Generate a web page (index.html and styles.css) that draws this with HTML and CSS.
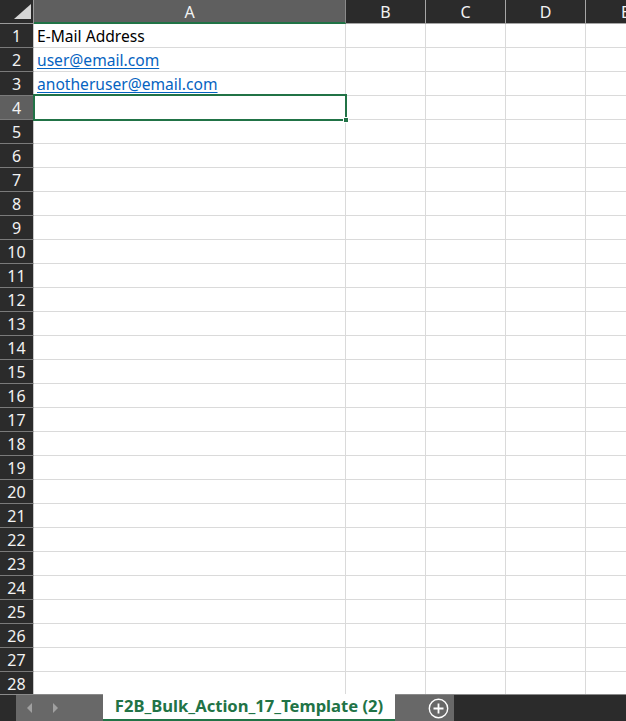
FILE: index.html
```html
<!DOCTYPE html>
<html>
<head>
<meta charset="utf-8">
<link rel="stylesheet" href="styles.css">
</head>
<body>
<div class="app">
  <div class="sheet">
    <div class="grid" id="grid">
      <div class="corner"><svg width="34" height="24" viewBox="0 0 34 24"><polygon points="14,19 31,19 31,4" fill="#d6d6d6"/></svg></div>
      <div class="colhead sel">A</div>
      <div class="colhead">B</div>
      <div class="colhead">C</div>
      <div class="colhead">D</div>
      <div class="colhead">E</div>

      <div class="rowhead">1</div><div class="cell">E-Mail Address</div><div class="cell"></div><div class="cell"></div><div class="cell"></div><div class="cell"></div>
      <div class="rowhead">2</div><div class="cell"><span class="link">user@email.com</span></div><div class="cell"></div><div class="cell"></div><div class="cell"></div><div class="cell"></div>
      <div class="rowhead">3</div><div class="cell"><span class="link">anotheruser@email.com</span></div><div class="cell"></div><div class="cell"></div><div class="cell"></div><div class="cell"></div>
      <div class="rowhead sel">4</div><div class="cell active"><span class="handle"></span></div><div class="cell"></div><div class="cell"></div><div class="cell"></div><div class="cell"></div>
      <div class="rowhead">5</div><div class="cell"></div><div class="cell"></div><div class="cell"></div><div class="cell"></div><div class="cell"></div>
      <div class="rowhead">6</div><div class="cell"></div><div class="cell"></div><div class="cell"></div><div class="cell"></div><div class="cell"></div>
      <div class="rowhead">7</div><div class="cell"></div><div class="cell"></div><div class="cell"></div><div class="cell"></div><div class="cell"></div>
      <div class="rowhead">8</div><div class="cell"></div><div class="cell"></div><div class="cell"></div><div class="cell"></div><div class="cell"></div>
      <div class="rowhead">9</div><div class="cell"></div><div class="cell"></div><div class="cell"></div><div class="cell"></div><div class="cell"></div>
      <div class="rowhead">10</div><div class="cell"></div><div class="cell"></div><div class="cell"></div><div class="cell"></div><div class="cell"></div>
      <div class="rowhead">11</div><div class="cell"></div><div class="cell"></div><div class="cell"></div><div class="cell"></div><div class="cell"></div>
      <div class="rowhead">12</div><div class="cell"></div><div class="cell"></div><div class="cell"></div><div class="cell"></div><div class="cell"></div>
      <div class="rowhead">13</div><div class="cell"></div><div class="cell"></div><div class="cell"></div><div class="cell"></div><div class="cell"></div>
      <div class="rowhead">14</div><div class="cell"></div><div class="cell"></div><div class="cell"></div><div class="cell"></div><div class="cell"></div>
      <div class="rowhead">15</div><div class="cell"></div><div class="cell"></div><div class="cell"></div><div class="cell"></div><div class="cell"></div>
      <div class="rowhead">16</div><div class="cell"></div><div class="cell"></div><div class="cell"></div><div class="cell"></div><div class="cell"></div>
      <div class="rowhead">17</div><div class="cell"></div><div class="cell"></div><div class="cell"></div><div class="cell"></div><div class="cell"></div>
      <div class="rowhead">18</div><div class="cell"></div><div class="cell"></div><div class="cell"></div><div class="cell"></div><div class="cell"></div>
      <div class="rowhead">19</div><div class="cell"></div><div class="cell"></div><div class="cell"></div><div class="cell"></div><div class="cell"></div>
      <div class="rowhead">20</div><div class="cell"></div><div class="cell"></div><div class="cell"></div><div class="cell"></div><div class="cell"></div>
      <div class="rowhead">21</div><div class="cell"></div><div class="cell"></div><div class="cell"></div><div class="cell"></div><div class="cell"></div>
      <div class="rowhead">22</div><div class="cell"></div><div class="cell"></div><div class="cell"></div><div class="cell"></div><div class="cell"></div>
      <div class="rowhead">23</div><div class="cell"></div><div class="cell"></div><div class="cell"></div><div class="cell"></div><div class="cell"></div>
      <div class="rowhead">24</div><div class="cell"></div><div class="cell"></div><div class="cell"></div><div class="cell"></div><div class="cell"></div>
      <div class="rowhead">25</div><div class="cell"></div><div class="cell"></div><div class="cell"></div><div class="cell"></div><div class="cell"></div>
      <div class="rowhead">26</div><div class="cell"></div><div class="cell"></div><div class="cell"></div><div class="cell"></div><div class="cell"></div>
      <div class="rowhead">27</div><div class="cell"></div><div class="cell"></div><div class="cell"></div><div class="cell"></div><div class="cell"></div>
      <div class="rowhead">28</div><div class="cell"></div><div class="cell"></div><div class="cell"></div><div class="cell"></div><div class="cell"></div>
      <div class="rowhead">29</div><div class="cell"></div><div class="cell"></div><div class="cell"></div><div class="cell"></div><div class="cell"></div>
    </div>
  </div>
  <div class="tabbar">
    <div class="tb-dark-left"></div>
    <div class="tb-nav">
      <span class="arrow left"></span>
      <span class="arrow right"></span>
    </div>
    <div class="tab">F2B_Bulk_Action_17_Template (2)</div>
    <div class="tb-add">
      <svg width="21" height="21" viewBox="0 0 21 21"><circle cx="10.5" cy="10.5" r="9.2" fill="none" stroke="#fff" stroke-width="1.4"/><path d="M10.5 5.5v10M5.5 10.5h10" stroke="#fff" stroke-width="1.8"/></svg>
    </div>
    <div class="tb-rest"></div>
  </div>
</div>
</body>
</html>
```

FILE: styles.css
```css
* { box-sizing: border-box; }
html, body { margin: 0; padding: 0; }
body {
  width: 626px;
  height: 721px;
  overflow: hidden;
  background: #ffffff;
  font-family: "Noto Sans", "Open Sans", sans-serif;
}
.app {
  display: flex;
  flex-direction: column;
  height: 721px;
}
.sheet {
  height: 694px;
  overflow: hidden;
}
.grid {
  display: grid;
  grid-template-columns: 34px 312px 80px 80px 80px 80px;
  grid-auto-rows: 24px;
}
.corner {
  background: #2b2b2b;
  border-right: 1px solid #9a9a9a;
  border-bottom: 1px solid #9a9a9a;
}
.corner svg { display: block; }
.colhead {
  background: #2b2b2b;
  color: #f2f2f2;
  font-size: 16px;
  display: flex;
  align-items: center;
  justify-content: center;
  border-right: 1px solid #a6a6a6;
  border-bottom: 1px solid #a6a6a6;
  padding-top: 1px;
}
.colhead.sel {
  background: #5f5f5f;
  border-right-color: #8a8a8a;
  border-bottom: 2px solid #217346;
  padding-top: 2px;
}
.rowhead {
  background: #2b2b2b;
  color: #f2f2f2;
  font-size: 16px;
  display: flex;
  align-items: center;
  justify-content: center;
  border-right: 1px solid #c8c8c8;
  border-bottom: 1px solid #7a7a7a;
  padding-top: 1px;
}
.rowhead.sel {
  background: #5f5f5f;
}
.cell {
  background: #ffffff;
  border-right: 1px solid #dadada;
  border-bottom: 1px solid #dadada;
  font-size: 15.6px;
  color: #000;
  padding-left: 3px;
  display: flex;
  align-items: center;
  white-space: nowrap;
  overflow: visible;
}
.link {
  color: #0563c1;
  text-decoration: underline;
  text-underline-offset: 2px;
}
.cell.active {
  position: relative;
}
.cell.active::after {
  content: "";
  position: absolute;
  left: -1px;
  top: -2px;
  right: -2px;
  bottom: -2px;
  border: 2px solid #217346;
  pointer-events: none;
}
.handle {
  position: absolute;
  right: -4px;
  bottom: -4px;
  width: 6px;
  height: 6px;
  background: #217346;
  border: 1px solid #ffffff;
  z-index: 2;
}
.tabbar {
  height: 27px;
  display: flex;
  background: #2b2b2b;
  border-top: 1px solid #8a8a8a;
}
.tb-dark-left {
  width: 16px;
  background: #2b2b2b;
}
.tb-nav {
  width: 87px;
  background: #686868;
  display: flex;
  align-items: center;
  padding-left: 11px;
  gap: 21px;
}
.arrow {
  width: 0;
  height: 0;
  border-top: 5px solid transparent;
  border-bottom: 5px solid transparent;
}
.arrow.left { border-right: 5px solid #a0a0a0; }
.arrow.right { border-left: 5px solid #a0a0a0; }
.tab {
  width: 292px;
  background: #ffffff;
  color: #217346;
  font-weight: 700;
  font-size: 16.6px;
  display: flex;
  align-items: center;
  justify-content: center;
  border-bottom: 2px solid #217346;
  margin-top: -1px;
  padding-bottom: 3px;
  white-space: nowrap;
}
.tb-add {
  width: 59px;
  background: #686868;
  display: flex;
  align-items: center;
  padding-left: 33px;
}
.tb-add svg { display: block; }
.tb-rest {
  flex: 1;
  background: #2b2b2b;
}
```
